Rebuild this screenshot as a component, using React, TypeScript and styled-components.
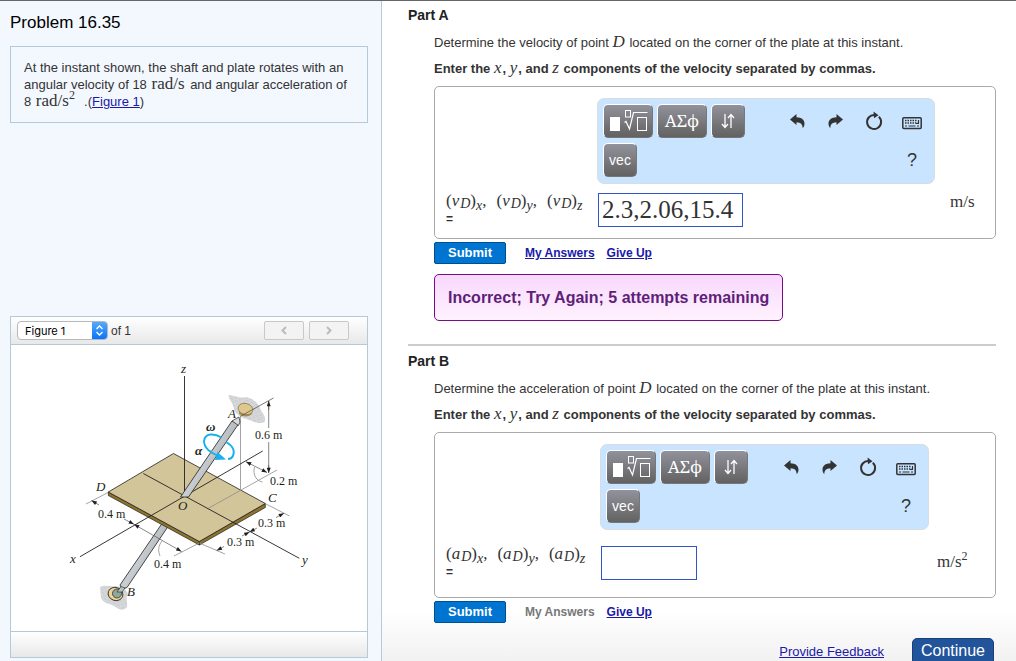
import React, { useState } from 'react';
import styled, { createGlobalStyle } from 'styled-components';

const GlobalStyle = createGlobalStyle`
  * { box-sizing: border-box; }
  body {
    margin: 0;
    background: #fff;
    color: #333;
    font-family: "Liberation Sans", Arial, sans-serif;
    font-size: 13px;
    line-height: 16px;
  }
  button, input, select { font-family: inherit; margin: 0; }
  h1, h2, p { margin: 0; }
`;

const Shell = styled.div`
  display: grid;
  grid-template-columns: 382px minmax(0, 1fr);
  grid-template-rows: minmax(0, 1fr);
  height: 100vh;
  overflow: hidden;
  border-top: 1px solid #666;
`;

/* ---------- left column ---------- */

const Sidebar = styled.aside`
  display: flex;
  flex-direction: column;
  min-height: 0;
  padding: 12px 13px 3px 10px;
  background: #f3f8ff;
  border-right: 1px solid #b3cadb;
`;

const ProblemTitle = styled.h1`
  color: #000;
  font-size: 17px;
  line-height: 20px;
  font-weight: 400;
`;

const Statement = styled.p`
  margin-top: 13px;
  padding: 12px 12px 12px 13px;
  border: 1px solid #b3cadb;
  line-height: 17px;
`;

const Link = styled.a`
  color: #1a1aa6;
  text-decoration: underline;
`;

const Unit = styled.span`
  padding: 0 2px 0 1px;
  font-family: "Liberation Serif", "Times New Roman", serif;
  font-size: 17px;
  line-height: 1px;
  sup { font-size: 12px; line-height: 1px; }
`;

const Var = styled.i`
  padding-right: 1px;
  font-family: "Liberation Serif", "Times New Roman", serif;
  font-size: 17px;
  line-height: 1px;
  font-weight: 400;
`;

const FigurePanel = styled.section`
  display: flex;
  flex-direction: column;
  margin-top: auto;
  border: 1px solid #b3cadb;
  background: #fff;
`;

const FigureHeader = styled.header`
  display: flex;
  align-items: center;
  height: 28px;
  padding: 0 18px 0 6px;
  border-bottom: 1px solid #b3cadb;
  background: linear-gradient(#fff, #e8e8e8);
`;

const FigureFooter = styled.footer`
  height: 26px;
  border-top: 1px solid #b3cadb;
  background: linear-gradient(#fff, #e8e8e8);
`;

const SelectFrame = styled.label`
  display: flex;
  height: 19px;
  border: 1px solid #b8b8b8;
  border-radius: 4px;
  background: #fff;
  overflow: hidden;
`;

const FigureSelect = styled.select`
  appearance: none;
  width: 74px;
  padding: 0 7px;
  border: 0;
  background: transparent;
  color: #000;
  font-family: Inter, sans-serif;
  font-size: 11px;
`;

const SelectCap = styled.span`
  display: flex;
  align-items: center;
  justify-content: center;
  width: 15px;
  background: linear-gradient(#56a9fb, #0a74fb);
`;

const FigureTotal = styled.span`
  flex: 1;
  padding-left: 3px;
  font-size: 12px;
`;

const PagerButton = styled.button`
  display: flex;
  align-items: center;
  justify-content: center;
  width: 40px;
  height: 19px;
  margin-left: 5px;
  padding: 0;
  border: 1px solid #c8c8c8;
  border-radius: 2px;
  background: #f3f3f3;
`;

const Drawing = styled.svg`
  display: block;
  width: 100%;
  height: 286px;
  text { font-family: "Liberation Serif", serif; font-size: 12px; fill: #231f20; }
  .name { font-style: italic; font-size: 13px; }
  .spin { font-style: italic; font-weight: 700; font-size: 13px; }
`;

/* ---------- right column ---------- */

const Content = styled.main`
  display: flex;
  flex-direction: column;
  min-width: 0;
  padding: 6px 20px 0 26px;
  background: linear-gradient(#fff 610px, #ececec 680px);
`;

const Part = styled.section`
  & + & {
    margin-top: 23px;
    padding-top: 7px;
    border-top: 2px solid #ccc;
  }
`;

const PartTitle = styled.h2`
  color: #222;
  font-size: 14px;
  line-height: 16px;
`;

const PartBody = styled.div`
  padding-left: 26px;
`;

const Prompt = styled.p<{ $strong?: boolean }>`
  padding-top: ${(p) => (p.$strong ? 10 : 12)}px;
  line-height: 16px;
  font-weight: ${(p) => (p.$strong ? 700 : 400)};
`;

const AnswerBox = styled.form<{ $label: number; $unit: number; $roomy?: boolean }>`
  display: grid;
  grid-template-columns: ${(p) => p.$label}px minmax(0, 1fr) ${(p) => p.$unit}px;
  row-gap: ${(p) => (p.$roomy ? 16 : 9)}px;
  margin-top: 9px;
  padding: 11px 0 ${(p) => (p.$roomy ? 17 : 11)}px 11px;
  border: 1px solid #aaa;
  border-radius: 5px;
  background: #fff;
`;

const Toolbar = styled.div`
  grid-column: 2;
  display: flex;
  justify-content: space-between;
  height: 86px;
  padding: 5px 3px 5px 5px;
  border: 1px solid #d9dde2;
  border-radius: 7px;
  background: #c9e4ff;
`;

const Palette = styled.div`
  display: flex;
  flex-wrap: wrap;
  align-content: flex-start;
  gap: 5px 4px;
  width: 144px;
`;

const Key = styled.button<{ $wide?: boolean }>`
  display: flex;
  align-items: center;
  justify-content: center;
  width: ${(p) => (p.$wide ? 50 : 34)}px;
  height: 34px;
  padding: 0;
  border: 1px solid;
  border-color: #fff #777 #777 #fff;
  border-radius: 5px;
  background: linear-gradient(#92929c, #626262);
  color: #fff;
  font-size: 14px;
  line-height: 28px;
`;

const Greek = styled.span`
  font-family: "Noto Serif", "Liberation Serif", serif;
  font-size: 17px;
`;

const Tools = styled.div`
  display: grid;
  grid-template-columns: repeat(4, 38px);
  grid-template-rows: 34px 44px;
`;

const Tool = styled.button<{ $last?: boolean }>`
  display: flex;
  align-items: center;
  justify-content: center;
  padding: 0;
  border: 0;
  background: transparent;
  color: #333;
  font-size: 18px;
  grid-column: ${(p) => (p.$last ? 4 : 'auto')};
`;

const Quantity = styled.label`
  grid-column: 1;
  font-size: 12px;
  line-height: 16px;
  font-weight: 700;
`;

const Formula = styled.span`
  display: flex;
  gap: 10px;
  height: 18px;
  font-family: "Liberation Serif", serif;
  font-size: 17px;
  line-height: 16px;
  font-weight: 400;
  white-space: nowrap;
  i { padding-right: 1px; }
  sub { font-size: 14px; line-height: 1px; font-style: italic; vertical-align: -4px; }
  sub.inner { vertical-align: -2px; }
`;

const AnswerInput = styled.input`
  display: block;
  width: ${(p: { $width: number }) => p.$width}px;
  height: 34px;
  margin-left: 1px;
  padding: 0 3px;
  border: 1px solid #2f55c8;
  background: #fff;
  color: #333;
  font-family: "Liberation Serif", serif;
  font-size: 25px;
  outline: none;
`;

const UnitCell = styled.div<{ $left: number; $top: number }>`
  padding: ${(p) => p.$top}px 0 0 ${(p) => p.$left}px;
`;

const Actions = styled.div`
  display: flex;
  align-items: center;
  gap: 12px;
  margin-top: 3px;
  font-size: 12px;
  font-weight: 700;
`;

const SubmitButton = styled.button`
  width: 72px;
  height: 22px;
  margin-right: 7px;
  padding: 0 0 1px;
  border: 1px solid #00508f;
  border-radius: 2px;
  background: #0074d1;
  color: #fff;
  font-size: 13px;
  font-weight: 700;
`;

const Muted = styled.span`
  color: #777;
`;

const Verdict = styled.p`
  width: fit-content;
  margin-top: 10px;
  padding: 12px 13px;
  border: 1px solid #770c87;
  border-radius: 5px;
  background: linear-gradient(#f8d8fd, #fff2ff);
  color: #5f1f78;
  font-size: 16px;
  line-height: 21px;
  font-weight: 700;
`;

const PageFooter = styled.footer`
  display: flex;
  align-items: flex-start;
  justify-content: flex-end;
  gap: 28px;
  margin-top: 15px;
  padding-right: 2px;
  line-height: 27px;
`;

const ContinueButton = styled.button`
  flex-shrink: 0;
  width: 82px;
  height: 27px;
  padding: 0 0 2px;
  border: 1px solid #173f78;
  border-radius: 5px;
  background: #22549b;
  color: #fff;
  font-size: 16px;
`;

/* ---------- icons ---------- */

const RootIcon = () => (
  <svg width="40" height="26" viewBox="0 0 40 26" fill="none" stroke="#fff">
    <rect x="2" y="9" width="10" height="14" fill="#fff" stroke="none" />
    <rect x="17.500" y="2.500" width="5" height="6.500" />
    <path d="M16.500 14.500l1.500-1 3.500 7.500L25.500 4.500H39.500" strokeWidth="1.200" />
    <rect x="29.500" y="9.500" width="9" height="13" />
  </svg>
);

const UpDownIcon = () => (
  <svg width="14" height="18" viewBox="0 0 14 18" fill="none" stroke="#fff" strokeWidth="1.300">
    <path d="M4 2v13M1 12l3 3.500L7 12M10 16V3M7 6l3-3.500L13 6" />
  </svg>
);

const UndoIcon = () => (
  <svg width="16" height="18" viewBox="0 0 16 18">
    <path d="M0 7.500L6.500 2v3.200c5 .2 8 2.600 8 6.300 0 2-.7 3.700-1.800 4.800-.1-4-1.800-5.800-6.200-6V13z" fill="#333" />
  </svg>
);

const RedoIcon = () => (
  <svg width="16" height="18" viewBox="0 0 16 18">
    <path d="M15 7.500L8.500 2v3.200c-5 .2-8 2.600-8 6.300 0 2 .7 3.700 1.800 4.800.1-4 1.800-5.800 6.200-6V13z" fill="#333" />
  </svg>
);

const ResetIcon = () => (
  <svg width="18" height="20" viewBox="0 0 18 20">
    <path d="M9.500 4A7 7 0 1 0 13.800 5.800" fill="none" stroke="#333" strokeWidth="2" />
    <path d="M8.500 .5l5 3.800-4.500 3z" fill="#333" />
  </svg>
);

const KeyboardIcon = () => (
  <svg width="20" height="18" viewBox="0 -4 20 18" fill="none" stroke="#333">
    <rect x=".8" y="1.800" width="18.400" height="10.700" rx="1" strokeWidth="1.500" />
    <path d="M3 4.500h12M3 7h11" strokeDasharray="1.500 1" strokeWidth="1.300" />
    <path d="M16.500 4v3.500M14 7.400h3M3 10h2M6.500 10h7M15 10h2" strokeWidth="1.200" />
  </svg>
);

const Chevron = ({ d }: { d: string }) => (
  <svg width="8" height="9" viewBox="0 0 8 9" fill="none" stroke="#bbb" strokeWidth="2">
    <path d={d} />
  </svg>
);

/* Rotating shaft AB carrying the inclined plate CD */
const ShaftDrawing = () => (
  <Drawing viewBox="11 345 356 286" role="img" aria-label="Shaft and plate">
    <defs>
      <marker id="tip" viewBox="0 0 8 6" refX="8" refY="3" markerWidth="6" markerHeight="4" markerUnits="userSpaceOnUse" orient="auto-start-reverse">
        <path d="M0 0L8 3L0 6z" fill="#231f20" />
      </marker>
      <linearGradient id="steel" x1="0" y1="0" x2="1" y2=".7">
        <stop offset="0" stopColor="#9da5ab" />
        <stop offset=".5" stopColor="#c9ced2" />
        <stop offset="1" stopColor="#959da3" />
      </linearGradient>
      <pattern id="grain" width="5" height="5" patternUnits="userSpaceOnUse" patternTransform="rotate(25)">
        <rect width="5" height="5" fill="#d6d8da" />
        <path d="M0 1h3M2 3.500h3" stroke="#c3c6c9" strokeWidth=".8" />
      </pattern>
    </defs>

    <path d="M100 587c5-3 10 0 16-1 6 1 10 3 12 8-3 4 0 8-1 13-4 5-9 2-13-1-5-3-10-2-13-8z" fill="url(#grain)" />
    <path d="M162 523.500l6 3L127 587.500l-5 1.500-2-4z" fill="url(#steel)" stroke="#231f20" strokeWidth=".8" />
    <ellipse cx="115.500" cy="594" rx="7.500" ry="6.500" fill="#f0d493" stroke="#231f20" strokeWidth=".8" transform="rotate(20 115.500 594)" />
    <ellipse cx="117" cy="593.500" rx="4.500" ry="4.500" fill="#8ea89f" stroke="#231f20" strokeWidth=".7" />
    <path d="M117 592l4-5.500 4 1.500-3 4z" fill="#b5c4bd" stroke="#231f20" strokeWidth=".6" />

    <path d="M108.300 492l91 49.500v3.500l-91-49.500zM199.300 541.500l66-38v4l-66 37.500z" fill="#8c742a" stroke="#231f20" strokeWidth=".7" />
    <path d="M173.500 453.500L265.300 503.500l-66 38-91-49.500z" fill="#d3c59a" stroke="#231f20" strokeWidth=".8" />

    <g fill="none" stroke="#8d8d8d" strokeWidth=".8">
      <path d="M277 470L208.300 508.300M240.500 417V489" />
      <path d="M108 492.500L86 504M199.300 543L225 554M199.300 543L174 556M265 503.500L289.500 516" />
      <path d="M254.500 467c-2 8 2 14 8 15M162 541c-4 5-4 10-2 15" />
    </g>
    <path d="M80 556.700L262.700 451M143.300 473.500L299.300 558.300M184.500 376V496" fill="none" stroke="#231f20" strokeWidth=".9" />

    <path d="M228.500 395c6 0 11 4 18 2 7 2 12 6 14 12 2 5 6 7 4 13-6 3-12-1-18-3-7-2-12-6-13-12-1-5-5-7-5-12z" fill="url(#grain)" />
    <path d="M239 407v7q7 5 13 0v-7z" fill="#a48c56" />
    <ellipse cx="245.500" cy="409" rx="7.500" ry="5.500" fill="#dfc88d" stroke="#8a7440" strokeWidth=".7" transform="rotate(15 245.500 409)" />
    <path d="M240 416.500L273.500 398" stroke="#555" strokeWidth=".8" />
    <path d="M180.500 497L232 421l6.500 3L188.500 497z" fill="url(#steel)" stroke="#231f20" strokeWidth=".8" />
    <path d="M232 421l7-4 1 5-1.500 3.500z" fill="#d9dcde" stroke="#231f20" strokeWidth=".7" />

    <g fill="none" stroke="#16b1ee" strokeWidth="1.900">
      <path d="M221.500 437.500C214 433 205 433 204 441c0 7 7 12 15 15" />
      <path d="M226 442c7 4 9 9 7 14-1 2-3 3-5 3" />
    </g>
    <path d="M217.500 452l8.500 7.500-11 .500z" fill="#16b1ee" />

    <g fill="none" stroke="#555" strokeWidth=".7">
      <path d="M268.700 401V428M268.700 442V472.500" />
      <path d="M268.700 410V401" markerEnd="url(#tip)" />
      <path d="M268.700 465V473" markerEnd="url(#tip)" />
      <path d="M246 461.700L267 472.500" markerStart="url(#tip)" markerEnd="url(#tip)" />
      <path d="M249.500 532L257 528" markerStart="url(#tip)" />
      <path d="M276 517.500L284 513.300" markerEnd="url(#tip)" />
      <path d="M242 536L249.500 532" markerEnd="url(#tip)" />
      <path d="M216.700 550.500L224 546.500" markerStart="url(#tip)" />
      <path d="M91.500 500.500L99 505" markerStart="url(#tip)" />
      <path d="M124 519L134 524.300" markerEnd="url(#tip)" />
      <path d="M134 524.300L181.500 551.500" markerStart="url(#tip)" markerEnd="url(#tip)" />
    </g>

    <text className="name" x="181" y="373">z</text>
    <text className="name" x="228" y="418">A</text>
    <text className="name" x="96" y="491">D</text>
    <text className="name" x="178" y="510">O</text>
    <text className="name" x="268" y="502">C</text>
    <text className="name" x="127" y="596">B</text>
    <text className="name" x="70" y="563">x</text>
    <text className="name" x="302" y="564">y</text>
    <text className="spin" x="206" y="431">ω</text>
    <text className="spin" x="195" y="455">α</text>
    <text x="255" y="439">0.6 m</text>
    <text x="270" y="485">0.2 m</text>
    <text x="258" y="527">0.3 m</text>
    <text x="227" y="546">0.3 m</text>
    <text x="98" y="518">0.4 m</text>
    <text x="154" y="568">0.4 m</text>
  </Drawing>
);

/* ---------- composed parts ---------- */

const EquationToolbar = () => (
  <Toolbar>
    <Palette>
      <Key type="button" $wide aria-label="Templates"><RootIcon /></Key>
      <Key type="button" $wide><Greek>ΑΣϕ</Greek></Key>
      <Key type="button" aria-label="Arrows"><UpDownIcon /></Key>
      <Key type="button">vec</Key>
    </Palette>
    <Tools>
      <Tool type="button" aria-label="Undo"><UndoIcon /></Tool>
      <Tool type="button" aria-label="Redo"><RedoIcon /></Tool>
      <Tool type="button" aria-label="Reset"><ResetIcon /></Tool>
      <Tool type="button" aria-label="Keyboard"><KeyboardIcon /></Tool>
      <Tool type="button" $last>?</Tool>
    </Tools>
  </Toolbar>
);

const Components = ({ symbol }: { symbol: string }) => (
  <Formula>
    {['x', 'y', 'z'].map((axis, i) => (
      <span key={axis}>
        (<i>{symbol}</i><sub className="inner">D</sub>)<sub>{axis}</sub>{i < 2 && ','}
      </span>
    ))}
  </Formula>
);

const VelocityHint = () => (
  <Prompt $strong>
    Enter the <Var>x</Var>, <Var>y</Var>, and <Var>z</Var> components of the velocity separated by commas.
  </Prompt>
);

export default function App() {
  const [velocity, setVelocity] = useState('2.3,2.06,15.4');
  const [acceleration, setAcceleration] = useState('');

  return (
    <>
      <GlobalStyle />
      <Shell>
        <Sidebar>
          <ProblemTitle>Problem 16.35</ProblemTitle>
          <Statement>
            At the instant shown, the shaft and plate rotates with an angular velocity of 18 <Unit>rad/s</Unit> and
            angular acceleration of 8 <Unit>rad/s<sup>2</sup></Unit> &nbsp;.(<Link href="#figure">Figure 1</Link>)
          </Statement>
          <FigurePanel id="figure">
            <FigureHeader>
              <SelectFrame>
                <FigureSelect aria-label="Figure">
                  <option>Figure 1</option>
                </FigureSelect>
                <SelectCap>
                  <svg width="9" height="11" viewBox="0 0 9 11" fill="none" stroke="#fff" strokeWidth="1.300">
                    <path d="M1.500 4l3-3 3 3M1.500 7l3 3 3-3" />
                  </svg>
                </SelectCap>
              </SelectFrame>
              <FigureTotal>of 1</FigureTotal>
              <PagerButton type="button" aria-label="Previous figure"><Chevron d="M6 1L2.500 4.500L6 8" /></PagerButton>
              <PagerButton type="button" aria-label="Next figure"><Chevron d="M2 1l3.500 3.500L2 8" /></PagerButton>
            </FigureHeader>
            <ShaftDrawing />
            <FigureFooter />
          </FigurePanel>
        </Sidebar>

        <Content>
          <Part>
            <PartTitle>Part A</PartTitle>
            <PartBody>
              <Prompt>
                Determine the velocity of point <Var>D</Var> located on the corner of the plate at this instant.
              </Prompt>
              <VelocityHint />
              <AnswerBox $label={151} $unit={60}>
                <EquationToolbar />
                <Quantity htmlFor="velocity"><Components symbol="v" />=</Quantity>
                <AnswerInput id="velocity" $width={145} value={velocity} onChange={(e) => setVelocity(e.target.value)} />
                <UnitCell $left={14} $top={2}><Unit>m/s</Unit></UnitCell>
              </AnswerBox>
              <Actions>
                <SubmitButton type="button">Submit</SubmitButton>
                <Link href="#answers">My Answers</Link>
                <Link href="#give-up">Give Up</Link>
              </Actions>
              <Verdict>Incorrect; Try Again; 5 attempts remaining</Verdict>
            </PartBody>
          </Part>

          <Part>
            <PartTitle>Part B</PartTitle>
            <PartBody>
              <Prompt>
                Determine the acceleration of point <Var>D</Var> located on the corner of the plate at this instant.
              </Prompt>
              <VelocityHint />
              <AnswerBox $label={154} $unit={66} $roomy>
                <EquationToolbar />
                <Quantity htmlFor="acceleration"><Components symbol="a" />=</Quantity>
                <AnswerInput id="acceleration" $width={96} value={acceleration} onChange={(e) => setAcceleration(e.target.value)} />
                <UnitCell $left={7} $top={9}><Unit>m/s<sup>2</sup></Unit></UnitCell>
              </AnswerBox>
              <Actions>
                <SubmitButton type="button">Submit</SubmitButton>
                <Muted>My Answers</Muted>
                <Link href="#give-up">Give Up</Link>
              </Actions>
            </PartBody>
          </Part>

          <PageFooter>
            <Link href="#feedback">Provide Feedback</Link>
            <ContinueButton type="button">Continue</ContinueButton>
          </PageFooter>
        </Content>
      </Shell>
    </>
  );
}
